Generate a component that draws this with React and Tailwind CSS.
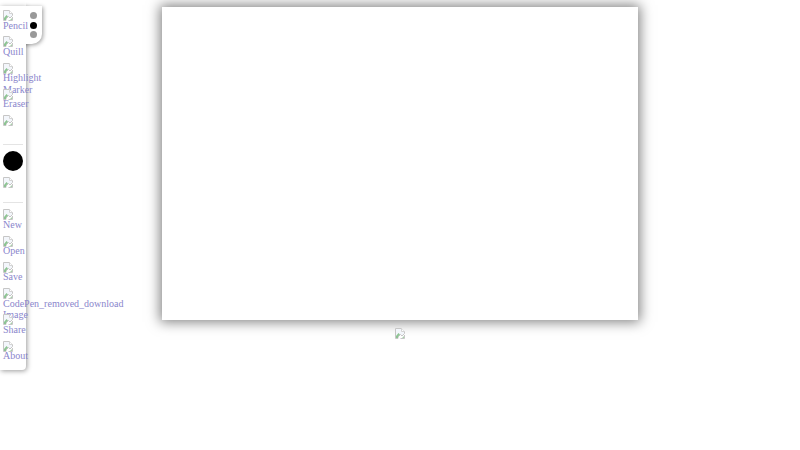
const BrokenImage = ({ className = "" }) => (
  <svg width="10" height="11" viewBox="0 0 10 11" className={className}>
    <path d="M0.5 0.5H6.5L9.5 3.5V5.5L7 8L5.5 6.5L3 9V10.5H0.5Z" fill="#f3f6fb" stroke="#c6c6c6" />
    <path d="M1 8L3.5 5L5 6.5L3 8.5V10H1Z" fill="#8cc492" />
    <path d="M6.5 0.5V3.5H9.5" fill="#fff" stroke="#d4d4d4" />
    <path d="M9.5 7V10.5H5.5" fill="none" stroke="#c6c6c6" />
    <path d="M7 10L9 8V10Z" fill="#a5d0a8" />
  </svg>
);

const tools = [
  { label: "Pencil" },
  { label: "Quill" },
  { label: "Highlight Marker" },
  { label: "Eraser" },
  { label: "" },
];

const actions = ["New", "Open", "Save", "CodePen_removed_download Image", "Share", "About"];

const ToolLink = ({ label }) => (
  <a href="#" className="relative z-10 block h-[26.25px] text-[10px] leading-[11.5px] text-[#8a86cc]">
    <BrokenImage className="-mb-[1.5px] block" />
    {label}
  </a>
);

export default function App() {
  return (
    <div className="relative flex h-[450px] w-[800px] flex-col items-center bg-white font-['Liberation_Serif',serif]">
      {/* canvas */}
      <div className="mt-[7px] h-[313px] w-[476px] bg-white shadow-[0_0_12px_2px_rgba(0,0,0,0.5)]" />
      <BrokenImage className="mt-[8px]" />

      {/* toolbar */}
      <div className="absolute left-0 top-[6px] flex h-[364px] w-[26px] flex-col rounded-br-[4px] pl-[3px] pt-[4px] shadow-[1px_1px_5px_rgba(0,0,0,0.4)]">
        {tools.map((t) => (
          <ToolLink key={t.label} label={t.label} />
        ))}
        <div className="mt-[3px] w-[20px] border-t border-[#e4e4e4]" />
        <div className="mt-[6px] h-[20px] w-[20px] rounded-full bg-black" />
        <BrokenImage className="mt-[6px]" />
        <div className="mt-[14px] mb-[6px] w-[20px] border-t border-[#e4e4e4]" />
        {actions.map((a) => (
          <ToolLink key={a} label={a} />
        ))}
      </div>

      {/* stroke size flyout */}
      <div className="absolute left-[20px] top-[6px] flex h-[38px] w-[22px] flex-col items-center justify-center gap-[2.5px] rounded-br-[10px] bg-white pl-[5px] shadow-[1px_1px_4px_rgba(0,0,0,0.4)] [clip-path:inset(-8px_-8px_-8px_6px)]">
        <span className="h-[7px] w-[7px] rounded-full bg-[#999999]" />
        <span className="h-[7px] w-[7px] rounded-full bg-black" />
        <span className="h-[7px] w-[7px] rounded-full bg-[#999999]" />
      </div>
    </div>
  );
}
